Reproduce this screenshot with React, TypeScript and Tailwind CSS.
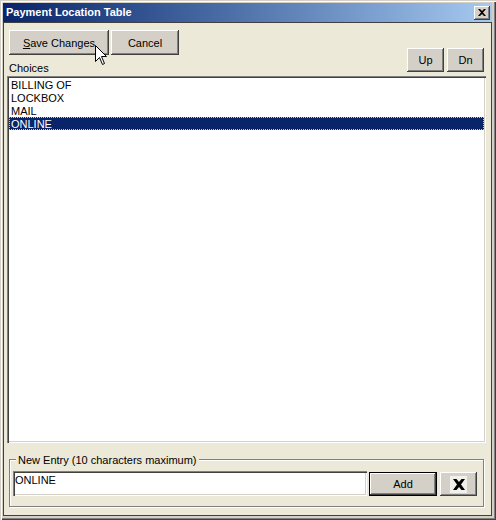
import React from 'react';

const raised =
  'bg-[#d4d0c8] text-black shadow-[inset_-1px_-1px_0_#404040,inset_1px_1px_0_#ffffff,inset_-2px_-2px_0_#808080,inset_2px_2px_0_#d4d0c8]';
const sunken =
  'bg-white shadow-[inset_1px_1px_0_#808080,inset_2px_2px_0_#404040,inset_-1px_-1px_0_#ffffff,inset_-2px_-2px_0_#d4d0c8]';

const choices = ['BILLING OF', 'LOCKBOX', 'MAIL', 'ONLINE'];

const Cursor = () => (
  <svg width="13" height="21" viewBox="0 0 13 21" className="absolute left-[95px] top-[45px]">
    <path
      d="M0.5 0.5 L0.5 16.5 L4.5 12.5 L7.5 19.5 L9.5 18.5 L6.5 11.5 L11.5 11.5 Z"
      fill="#ffffff"
      stroke="#000000"
      strokeWidth="1"
    />
  </svg>
);

export default function App() {
  const selected = 'ONLINE';

  return (
    <div
      className="relative w-[496px] h-[520px] flex flex-col pl-[3px] pt-[3px] pr-[4px] pb-[4px] bg-[#d4d0c8] text-[11px] leading-[13px] text-black shadow-[inset_1px_1px_0_#d4d0c8,inset_2px_2px_0_#ffffff,inset_-1px_-1px_0_#404040,inset_-2px_-2px_0_#808080]"
      style={{ fontFamily: '"Liberation Sans", Arial, sans-serif' }}
    >
      {/* Title bar */}
      <div className="h-[19px] flex items-center bg-linear-to-r from-[#0a246a] to-[#a6caf0]">
        <span className="pl-[3px] font-bold text-white">Payment Location Table</span>
        <div className={`ml-auto mr-[2px] w-[16px] h-[14px] flex items-center justify-center ${raised}`}>
          <svg width="8" height="7" viewBox="0 0 8 7">
            <path d="M0 0 L2 0 L4 2 L6 0 L8 0 L5 3.5 L8 7 L6 7 L4 5 L2 7 L0 7 L3 3.5 Z" fill="#000" />
          </svg>
        </div>
      </div>

      {/* Client area */}
      <div className="flex-1 flex flex-col border border-[#404040] bg-[#ece9d8]">
        <div className="flex items-end">
          <div className="flex flex-col pl-[5px] pt-[7px]">
            <div className="flex gap-[2px]">
              <button className={`w-[100px] h-[25px] pt-[2px] ${raised}`}>
                <span className="underline underline-offset-[1px]">S</span>ave Changes
              </button>
              <button className={`w-[68px] h-[25px] pt-[2px] ${raised}`}>Cancel</button>
            </div>
            <div className="mt-[6px] h-[13px] leading-[15px]">Choices</div>
          </div>
          <div className="ml-auto mr-[7px] mb-[2px] flex gap-[3px]">
            <button className={`w-[37px] h-[24px] ${raised}`}>Up</button>
            <button className={`w-[37px] h-[24px] ${raised}`}>Dn</button>
          </div>
        </div>

        {/* List box */}
        <div className={`mt-[2px] ml-[3px] w-[479px] h-[367px] p-[2px] ${sunken}`}>
          {choices.map((c) =>
            c === selected ? (
              <div
                key={c}
                className="h-[13px] pl-[1px] leading-[13px] bg-[#0a246a] text-white border border-dotted border-[#d8cf9a]"
              >
                {c}
              </div>
            ) : (
              <div key={c} className="h-[13px] pl-[2px] leading-[15px]">
                {c}
              </div>
            )
          )}
        </div>

        {/* New entry group */}
        <fieldset className="mt-[10px] ml-[5px] w-[475px] border border-[#808080] pb-[10px] shadow-[inset_1px_1px_0_#ffffff,1px_1px_0_#ffffff]">
          <legend className="ml-[6px] px-[2px] h-[13px] leading-[15px] bg-[#ece9d8]">
            New Entry (10 characters maximum)
          </legend>
          <div className="flex items-start pl-[3px] pt-[5px]">
            <div className={`w-[354px] h-[25px] pl-[2px] pt-[3px] ${sunken}`}>ONLINE</div>
            <button className="mt-[1px] ml-[2px] w-[68px] h-[24px] border border-black bg-[#d4d0c8] shadow-[inset_-1px_-1px_0_#404040,inset_1px_1px_0_#ffffff,inset_-2px_-2px_0_#808080]">
              Add
            </button>
            <button className={`mt-[1px] ml-[3px] w-[37px] h-[24px] flex items-center justify-center ${raised}`}>
              <span className="w-[17px] h-[17px] flex items-center justify-center bg-[#f2f0ea]">
                <svg width="12" height="11" viewBox="0 0 12 11">
                  <path
                    d="M0 0 L3.5 0 L6 3 L8.5 0 L12 0 L8 5.5 L12 11 L8.5 11 L6 8 L3.5 11 L0 11 L4 5.5 Z"
                    fill="#000"
                  />
                </svg>
              </span>
            </button>
          </div>
        </fieldset>
      </div>

      <Cursor />
    </div>
  );
}
